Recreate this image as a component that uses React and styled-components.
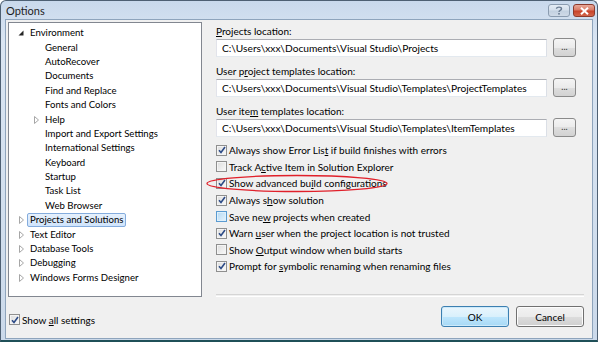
import styled, { createGlobalStyle } from 'styled-components';

const GlobalStyle = createGlobalStyle`
  html, body {
    margin: 0;
    padding: 0;
    background: #ffffff;
  }
  body {
    font-family: Lato, "Open Sans", sans-serif;
  }
`;

const Window = styled.div`
  box-sizing: border-box;
  width: 598px;
  height: 342px;
  display: flex;
  flex-direction: column;
  border: 1px solid #4e6073;
  border-bottom: 2px solid #1f5058;
  border-radius: 6px 6px 0 0;
  background: linear-gradient(#c9d9ec, #dae5f2 12%, #d2dfee 60%, #cbd9ea);
  padding-bottom: 1px;
  font-family: Lato, "Open Sans", sans-serif;
  font-size: 10px;
  color: #000;
`;

const TitleBar = styled.div`
  height: 18px;
  display: flex;
  align-items: center;
  padding: 0 2px 0 5px;
`;

const Title = styled.div`
  font-size: 11px;
  color: #1e1e1e;
  padding-top: 1px;
`;

const CaptionButtons = styled.div`
  margin-left: auto;
  display: flex;
  gap: 3px;
  padding-top: 1px;
`;

const CaptionButton = styled.div`
  box-sizing: border-box;
  width: 22px;
  height: 13px;
  display: flex;
  align-items: center;
  justify-content: center;
  border-radius: 3px;
  border: 1px solid ${(p) => (p.$close ? '#8c3a2c' : '#8b9cb0')};
  background: ${(p) =>
    p.$close
      ? 'linear-gradient(#e9a999, #d97b66 45%, #c8432a 55%, #d2664a)'
      : 'linear-gradient(#e4ecf5, #d5e0ec 45%, #c3d1e1 55%, #cfdae7)'};
`;

const Client = styled.div`
  flex: 1;
  margin: 0 4px;
  border: 1px solid #8ea4bc;
  background: #f0f0f0;
  display: grid;
  grid-template-columns: 194px 1fr;
  column-gap: 14px;
  padding: 2px 8px 0 2px;
`;

const LeftColumn = styled.div`
  display: flex;
  flex-direction: column;
`;

const Tree = styled.div`
  box-sizing: border-box;
  height: 275px;
  background: #ffffff;
  border: 1px solid #828790;
  padding-top: 3px;
  font-size: 9.6px;
`;

const TreeRow = styled.div`
  height: 14.4px;
  display: flex;
  align-items: center;
  padding-left: ${(p) => 6 + p.$level * 15}px;
`;

const Expander = styled.span`
  width: 12px;
  height: 12px;
  display: flex;
  align-items: center;
  justify-content: center;
`;

const TreeLabel = styled.span`
  box-sizing: border-box;
  height: 14px;
  line-height: 12px;
  padding: 0 2px;
  border: 1px solid ${(p) => (p.$selected ? '#84acdd' : 'transparent')};
  border-radius: 2px;
  background: ${(p) => (p.$selected ? 'linear-gradient(#e6f1fd, #d0e4fb)' : 'transparent')};
  white-space: nowrap;
`;

const ShowAllRow = styled.div`
  display: flex;
  align-items: center;
  gap: 2px;
  margin-top: 16px;
  padding-left: 1px;
  height: 13px;
`;

const RightColumn = styled.div`
  display: flex;
  flex-direction: column;
  padding-top: 3px;
`;

const Field = styled.div`
  margin-bottom: 8px;
`;

const FieldLabel = styled.div`
  height: 13px;
  line-height: 13px;
`;

const InputRow = styled.div`
  display: flex;
  align-items: center;
  gap: 6px;
`;

const TextBox = styled.div`
  box-sizing: border-box;
  width: 331px;
  height: 18px;
  line-height: 16px;
  padding-left: 5px;
  background: #ffffff;
  border: 1px solid #abadb3;
  border-color: #abadb3 #dbdfe6 #e3e9ef #e2e3ea;
  white-space: nowrap;
  overflow: hidden;
  font-size: 10.2px;
`;

const BrowseButton = styled.div`
  box-sizing: border-box;
  width: 23px;
  height: 19px;
  border: 1px solid #8a8a8a;
  border-radius: 3px;
  background: linear-gradient(#f4f4f4, #ebebeb 50%, #dedede 50%, #d2d2d2);
  display: flex;
  align-items: center;
  justify-content: center;
  font-size: 9px;
  color: #333;
  padding-bottom: 3px;
`;

const Options = styled.div`
  margin-top: -3px;
`;

const OptionRow = styled.div`
  position: relative;
  height: 16.6px;
  display: flex;
  align-items: center;
  gap: 2px;
  white-space: nowrap;
`;

const Box = styled.span`
  box-sizing: border-box;
  width: 11px;
  height: 11px;
  flex: none;
  display: flex;
  align-items: center;
  justify-content: center;
  border: 1px solid ${(p) => (p.$hot ? '#5b9bd1' : '#8f8f8f')};
  background: ${(p) =>
    p.$hot
      ? 'linear-gradient(135deg, #b4d8f3, #e6f3fc)'
      : 'linear-gradient(135deg, #dcdcdc, #fafafa)'};
  box-shadow: inset 0 0 0 1px ${(p) => (p.$hot ? '#dff0fb' : '#f4f4f4')};
`;

const Ellipse = styled.svg`
  position: absolute;
  left: -10px;
  top: -0.5px;
  overflow: visible;
`;

const Separator = styled.div`
  margin-top: auto;
  height: 1px;
  border-top: 1px solid #d5d5d5;
  border-bottom: 1px solid #ffffff;
`;

const ButtonRow = styled.div`
  display: flex;
  justify-content: flex-end;
  gap: 7px;
  margin: 9px 0 11px;
`;

const DialogButton = styled.div`
  box-sizing: border-box;
  width: 68px;
  height: 21px;
  display: flex;
  align-items: center;
  justify-content: center;
  border-radius: 3px;
  border: 1px solid ${(p) => (p.$default ? '#3c7fb1' : '#707070')};
  background: ${(p) =>
    p.$default
      ? 'linear-gradient(#eaf6fd, #d9f0fc 50%, #bee6fd 50%, #a7d9f5)'
      : 'linear-gradient(#f2f2f2, #ebebeb 50%, #dddddd 50%, #cfcfcf)'};
  box-shadow: inset 0 0 0 1px ${(p) => (p.$default ? '#cdeafa' : '#fcfcfc')};
`;

const Check = ({ checked, hot }) => (
  <Box $hot={hot}>
    {checked && (
      <svg width="8" height="8" viewBox="0 0 8 8">
        <path d="M1 4.2 L3 6.5 L7 1" stroke="#2c4a86" strokeWidth="1.6" fill="none" />
      </svg>
    )}
  </Box>
);

const Arrow = ({ open }) =>
  open ? (
    <svg width="6" height="6" viewBox="0 0 6 6">
      <path d="M5.5 0.5 L5.5 5.5 L0.5 5.5 Z" fill="#262626" />
    </svg>
  ) : (
    <svg width="5" height="8" viewBox="0 0 5 8">
      <path d="M0.5 0.5 L4.5 4 L0.5 7.5 Z" fill="#ffffff" stroke="#a6a6a6" strokeWidth="1" />
    </svg>
  );

const tree = [
  { label: 'Environment', level: 0, arrow: 'open' },
  { label: 'General', level: 1 },
  { label: 'AutoRecover', level: 1 },
  { label: 'Documents', level: 1 },
  { label: 'Find and Replace', level: 1 },
  { label: 'Fonts and Colors', level: 1 },
  { label: 'Help', level: 1, arrow: 'closed' },
  { label: 'Import and Export Settings', level: 1 },
  { label: 'International Settings', level: 1 },
  { label: 'Keyboard', level: 1 },
  { label: 'Startup', level: 1 },
  { label: 'Task List', level: 1 },
  { label: 'Web Browser', level: 1 },
  { label: 'Projects and Solutions', level: 0, arrow: 'closed', selected: true },
  { label: 'Text Editor', level: 0, arrow: 'closed' },
  { label: 'Database Tools', level: 0, arrow: 'closed' },
  { label: 'Debugging', level: 0, arrow: 'closed' },
  { label: 'Windows Forms Designer', level: 0, arrow: 'closed' },
];

const fields = [
  {
    label: (
      <>
        <u>P</u>rojects location:
      </>
    ),
    value: 'C:\\Users\\xxx\\Documents\\Visual Studio\\Projects',
  },
  {
    label: (
      <>
        User p<u>r</u>oject templates location:
      </>
    ),
    value: 'C:\\Users\\xxx\\Documents\\Visual Studio\\Templates\\ProjectTemplates',
  },
  {
    label: (
      <>
        User ite<u>m</u> templates location:
      </>
    ),
    value: 'C:\\Users\\xxx\\Documents\\Visual Studio\\Templates\\ItemTemplates',
  },
];

const options = [
  { checked: true, text: <>Always show Error Lis<u>t</u> if build finishes with errors</> },
  { checked: false, text: <>Track A<u>c</u>tive Item in Solution Explorer</> },
  { checked: true, text: <>Show advanced bu<u>i</u>ld configurations</>, circled: true },
  { checked: true, text: <>Always s<u>h</u>ow solution</> },
  { checked: false, hot: true, text: <>Save ne<u>w</u> projects when created</> },
  { checked: true, text: <>Warn <u>u</u>ser when the project location is not trusted</> },
  { checked: false, text: <>Show <u>O</u>utput window when build starts</> },
  { checked: true, text: <>Prompt for <u>s</u>ymbolic renaming when renaming files</> },
];

export default function App() {
  return (
    <>
      <GlobalStyle />
      <Window>
        <TitleBar>
          <Title>Options</Title>
          <CaptionButtons>
            <CaptionButton>
              <svg width="8" height="9" viewBox="0 0 8 9">
                <path
                  d="M1.5 2.8 C1.5 0.6 6.5 0.6 6.5 2.8 C6.5 4.4 4 4.3 4 6"
                  stroke="#6a7c92"
                  strokeWidth="1.4"
                  fill="none"
                />
                <rect x="3.2" y="7" width="1.6" height="1.6" fill="#6a7c92" />
              </svg>
            </CaptionButton>
            <CaptionButton $close>
              <svg width="9" height="8" viewBox="0 0 9 8">
                <path d="M1 0.8 L8 7.2 M8 0.8 L1 7.2" stroke="#ffffff" strokeWidth="2" />
              </svg>
            </CaptionButton>
          </CaptionButtons>
        </TitleBar>
        <Client>
          <LeftColumn>
            <Tree>
              {tree.map((item) => (
                <TreeRow key={item.label} $level={item.level}>
                  <Expander>{item.arrow && <Arrow open={item.arrow === 'open'} />}</Expander>
                  <TreeLabel $selected={item.selected}>{item.label}</TreeLabel>
                </TreeRow>
              ))}
            </Tree>
            <ShowAllRow>
              <Check checked />
              <span>
                Show <u>a</u>ll settings
              </span>
            </ShowAllRow>
          </LeftColumn>
          <RightColumn>
            {fields.map((f, i) => (
              <Field key={i}>
                <FieldLabel>{f.label}</FieldLabel>
                <InputRow>
                  <TextBox>{f.value}</TextBox>
                  <BrowseButton>...</BrowseButton>
                </InputRow>
              </Field>
            ))}
            <Options>
              {options.map((o, i) => (
                <OptionRow key={i}>
                  <Check checked={o.checked} hot={o.hot} />
                  <span>{o.text}</span>
                  {o.circled && (
                    <Ellipse width="182" height="17" viewBox="0 0 182 17">
                      <ellipse cx="91" cy="8.5" rx="90" ry="8" fill="none" stroke="#e0202a" strokeWidth="1.3" />
                    </Ellipse>
                  )}
                </OptionRow>
              ))}
            </Options>
            <Separator />
            <ButtonRow>
              <DialogButton $default>OK</DialogButton>
              <DialogButton>Cancel</DialogButton>
            </ButtonRow>
          </RightColumn>
        </Client>
      </Window>
    </>
  );
}
